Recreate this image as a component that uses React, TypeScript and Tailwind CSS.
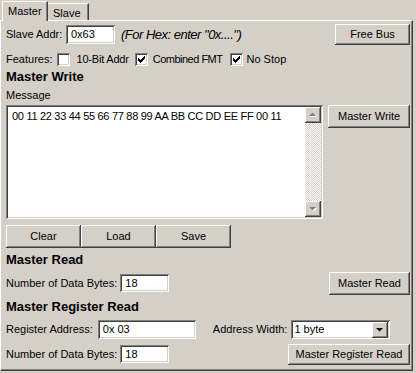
import React from "react";

const raised =
  "bg-[#d4d0c8] shadow-[inset_-1px_-1px_#404040,inset_1px_1px_#ffffff,inset_-2px_-2px_#808080,inset_2px_2px_#d4d0c8]";
const sunken =
  "bg-white shadow-[inset_1px_1px_#808080,inset_-1px_-1px_#ffffff,inset_2px_2px_#404040,inset_-2px_-2px_#d4d0c8]";

function Btn({ label, className = "" }: { label: string; className?: string }) {
  return (
    <div className={`${raised} flex items-center justify-center text-[11px] text-black ${className}`}>
      {label}
    </div>
  );
}

function Input({ value, className = "" }: { value: string; className?: string }) {
  return (
    <div className={`${sunken} flex items-center pl-[5px] text-[11px] text-black ${className}`}>{value}</div>
  );
}

function Check({ checked }: { checked: boolean }) {
  return (
    <div className={`${sunken} w-[13px] h-[13px] shrink-0`}>
      {checked && (
        <svg width="13" height="13" viewBox="0 0 13 13" shapeRendering="crispEdges">
          <rect x="3" y="5" width="1" height="3" fill="#000" />
          <rect x="4" y="6" width="1" height="3" fill="#000" />
          <rect x="5" y="7" width="1" height="3" fill="#000" />
          <rect x="6" y="6" width="1" height="3" fill="#000" />
          <rect x="7" y="5" width="1" height="3" fill="#000" />
          <rect x="8" y="4" width="1" height="3" fill="#000" />
          <rect x="9" y="3" width="1" height="3" fill="#000" />
        </svg>
      )}
    </div>
  );
}

function ArrowBtn({ dir, dark }: { dir: "up" | "down"; dark?: boolean }) {
  const pts = dir === "up" ? "4,9 11,9 7.5,5.5" : "4,6 11,6 7.5,9.5";
  return (
    <div className={`${raised} w-[16px] h-[16px] shrink-0`}>
      <svg width="16" height="16" viewBox="0 0 16 16">
        {!dark && (
          <polygon
            points={dir === "up" ? "5,10 12,10 8.5,6.5" : "5,7 12,7 8.5,10.5"}
            fill="#ffffff"
          />
        )}
        <polygon points={pts} fill={dark ? "#000000" : "#808080"} />
      </svg>
    </div>
  );
}

export default function App() {
  return (
    <div className="w-[416px] h-[373px] bg-[#d4d0c8] font-['Liberation_Sans',Arial,sans-serif] text-[11px] text-black leading-[13px] overflow-hidden">
      {/* tabs */}
      <div className="flex items-end h-[20px] pl-[2px]">
        <div className="relative z-10 w-[46px] h-[20px] mb-[-1px] bg-[#d4d0c8] border-t border-l border-r border-t-white border-l-white border-r-[#404040] shadow-[inset_-1px_0_#808080] flex items-center pl-[5px] pb-[1px]">
          Master
        </div>
        <div className="w-[41px] h-[17px] bg-[#d4d0c8] border-t border-r border-t-white border-r-[#404040] shadow-[inset_-1px_0_#808080] flex items-center pl-[5px] pt-[2px]">
          Slave
        </div>
      </div>

      {/* panel */}
      <div className="w-[413px] border-t border-l border-r border-b border-t-white border-l-white border-r-[#404040] border-b-[#404040] shadow-[inset_-1px_-1px_#808080] pl-[5px] pr-[2px] pt-[2px] pb-[5px]">
        {/* row 1 */}
        <div className="flex items-center h-[22px]">
          <span className="w-[60px]">Slave Addr:</span>
          <Input value="0x63" className="w-[49px] h-[19px]" />
          <span className="ml-[6px] italic text-[13px] tracking-[-0.5px]">(For Hex: enter "0x....")</span>
          <Btn label="Free Bus" className="ml-auto w-[75px] h-[21px]" />
        </div>

        {/* features */}
        <div className="flex items-center h-[18px] mt-[5px]">
          <span>Features:</span>
          <div className="ml-[5px]">
            <Check checked={false} />
          </div>
          <span className="ml-[6px] tracking-[-0.2px]">10-Bit Addr</span>
          <div className="ml-[6px]">
            <Check checked={true} />
          </div>
          <span className="ml-[5px] tracking-[-0.5px]">Combined FMT</span>
          <div className="ml-[7px]">
            <Check checked={true} />
          </div>
          <span className="ml-[4px]">No Stop</span>
        </div>

        {/* Master Write */}
        <div className="mt-[1px] h-[16px] leading-[16px] text-[13px] font-bold">Master Write</div>
        <div className="mt-[4px] h-[13px]">Message</div>
        <div className="mt-[3px] flex items-start">
          <div className={`${sunken} w-[318px] h-[114px] flex p-[2px]`}>
            <div className="flex-1 pl-[4px] pt-[3px] tracking-[-0.3px]">
              00 11 22 33 44 55 66 77 88 99 AA BB CC DD EE FF 00 11
            </div>
            <div className="w-[16px] flex flex-col bg-[repeating-conic-gradient(#d4d0c8_0%_25%,#ffffff_0%_50%)] bg-[length:2px_2px]">
              <ArrowBtn dir="up" />
              <div className="flex-1" />
              <ArrowBtn dir="down" />
            </div>
          </div>
          <Btn label="Master Write" className="ml-[5px] w-[82px] h-[23px]" />
        </div>

        <div className="mt-[6px] flex">
          <Btn label="Clear" className="w-[75px] h-[23px]" />
          <Btn label="Load" className="w-[75px] h-[23px]" />
          <Btn label="Save" className="w-[75px] h-[23px]" />
        </div>

        {/* Master Read */}
        <div className="mt-[4px] h-[16px] leading-[16px] text-[13px] font-bold">Master Read</div>
        <div className="mt-[4px] flex items-center h-[22px]">
          <span>Number of Data Bytes:</span>
          <Input value="18" className="ml-[3px] w-[49px] h-[18px]" />
          <Btn label="Master Read" className="ml-auto w-[81px] h-[23px]" />
        </div>

        {/* Master Register Read */}
        <div className="mt-[5px] h-[16px] leading-[16px] text-[13px] font-bold">Master Register Read</div>
        <div className="mt-[4px] flex items-center h-[21px]">
          <span>Register Address:</span>
          <Input value="0x 03" className="ml-[5px] w-[98px] h-[19px]" />
          <span className="ml-[17px]">Address Width:</span>
          <div className={`${sunken} ml-[4px] w-[99px] h-[19px] flex items-center p-[2px]`}>
            <span className="flex-1 pl-[1px]">1 byte</span>
            <ArrowBtn dir="down" dark />
          </div>
        </div>
        <div className="mt-[3px] flex items-center h-[22px]">
          <span>Number of Data Bytes:</span>
          <Input value="18" className="ml-[3px] w-[49px] h-[18px]" />
          <Btn label="Master Register Read" className="ml-auto w-[122px] h-[21px]" />
        </div>
      </div>
    </div>
  );
}
